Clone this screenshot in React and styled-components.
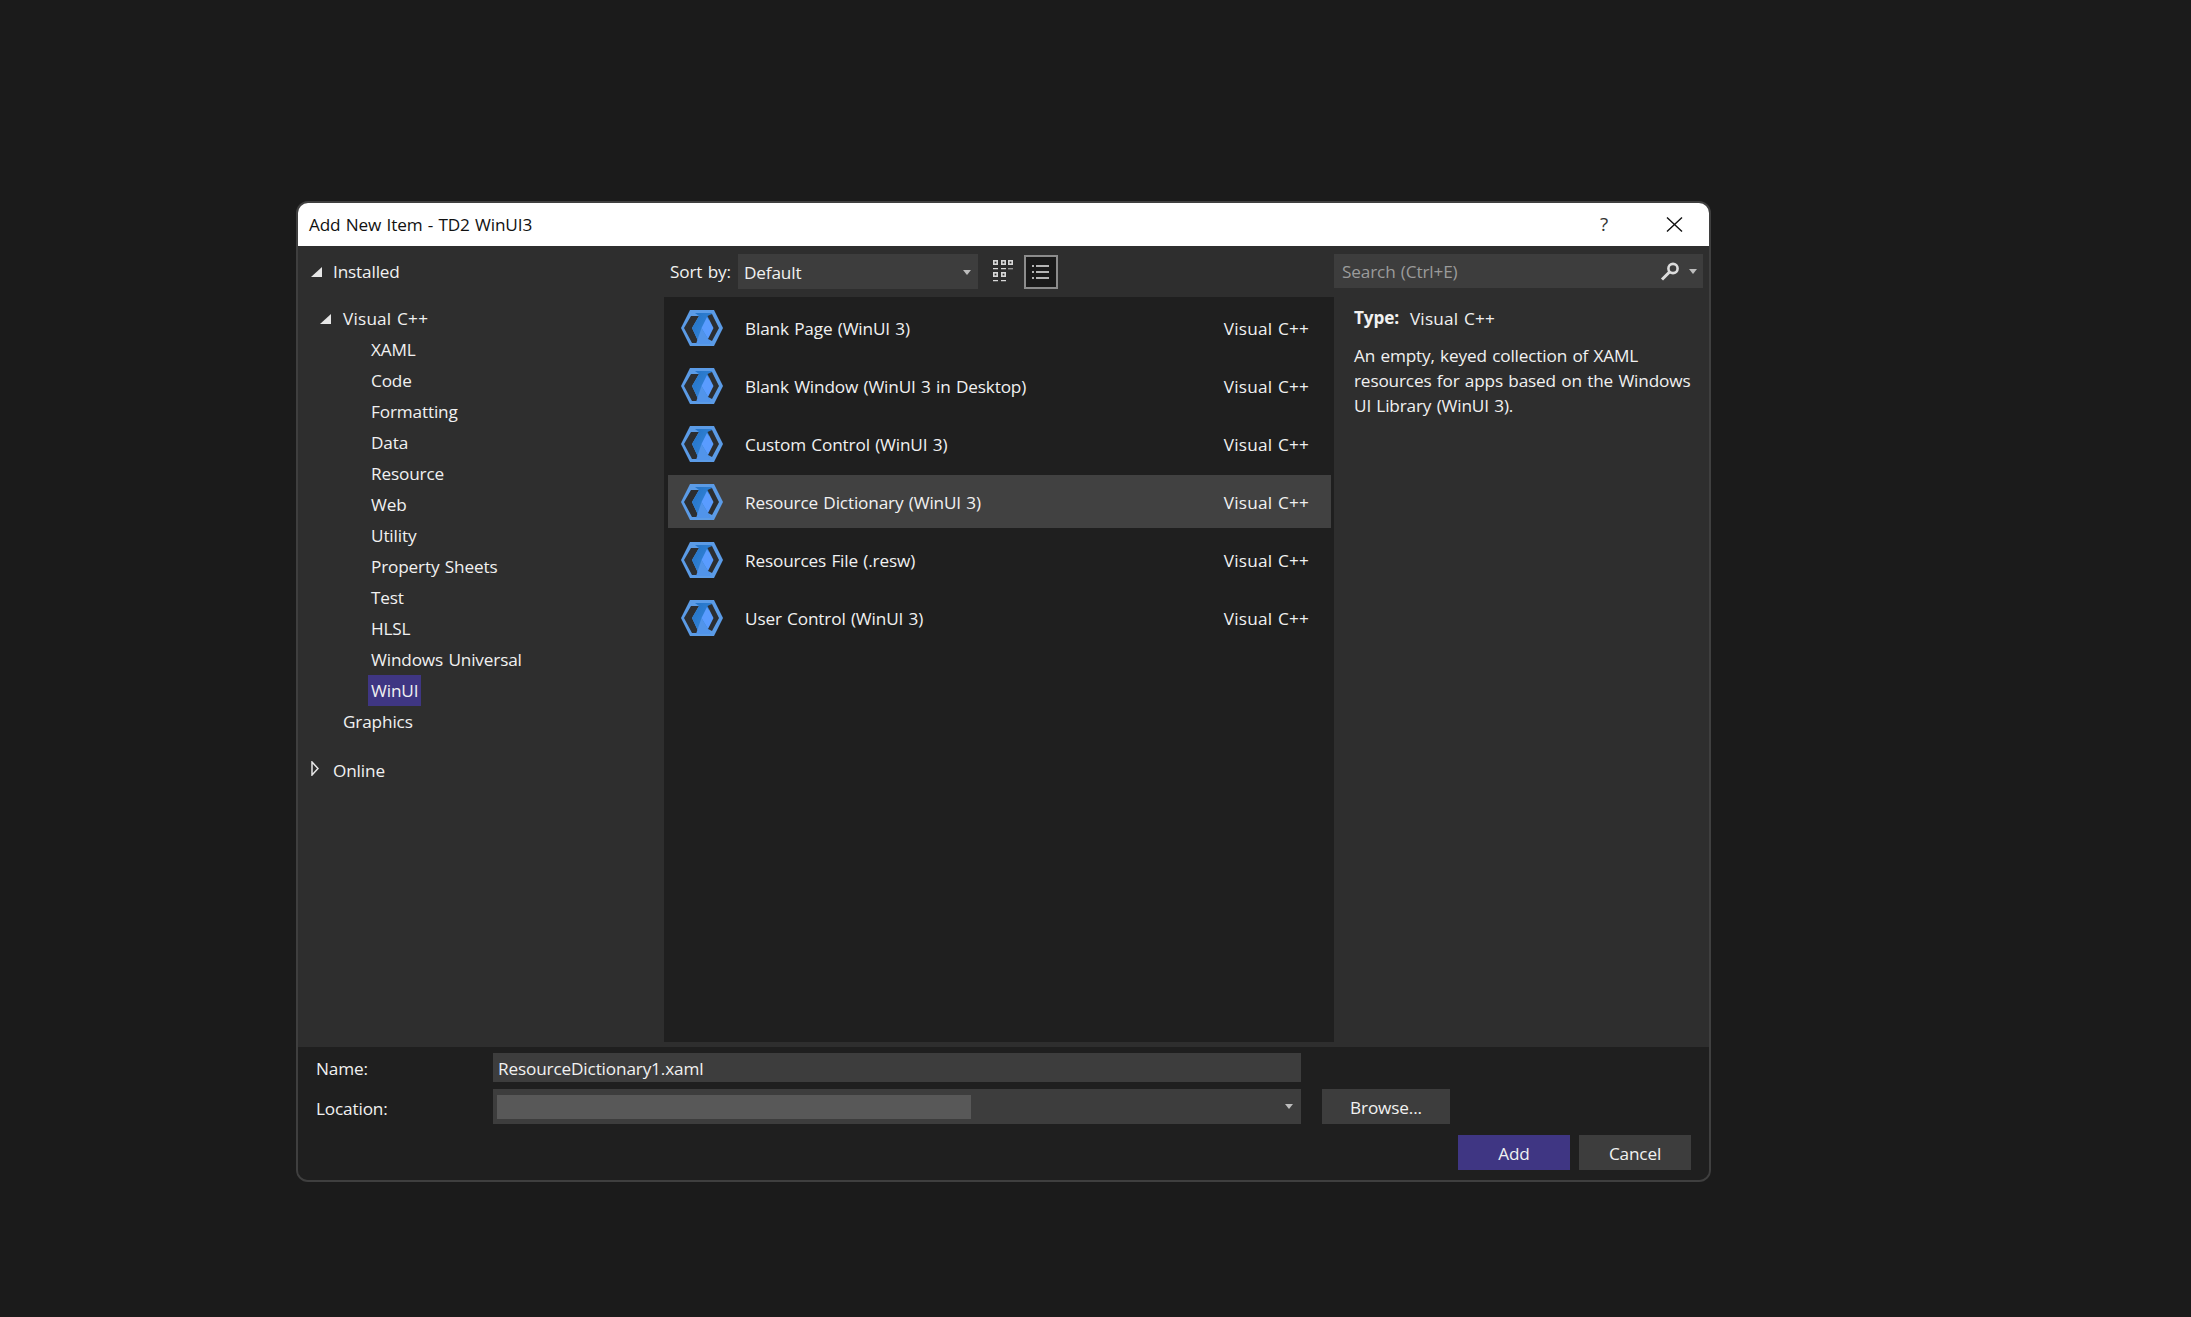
import React from 'react'
import styled, { createGlobalStyle } from 'styled-components'

const GlobalStyle = createGlobalStyle`
  html, body {
    margin: 0;
    padding: 0;
    background: #1b1b1b;
  }
  body {
    font-family: "Open Sans", "Noto Sans", sans-serif;
    font-size: 17.2px;
    letter-spacing: -0.15px;
    word-spacing: 1px;
    color: #f1f1f1;
  }
`

const Page = styled.div`
  width: 2191px;
  height: 1317px;
  padding: 201px 0 0 296px;
  box-sizing: border-box;
`

const Dialog = styled.div`
  width: 1415px;
  height: 981px;
  box-sizing: border-box;
  border: 2px solid #3f3f3f;
  border-radius: 12px;
  overflow: hidden;
  display: flex;
  flex-direction: column;
  background: #2e2e2e;
`

const TitleBar = styled.div`
  height: 43px;
  flex: none;
  background: #fff;
  color: #111;
  display: flex;
  align-items: center;
  padding: 0 26px 1px 11px;
  box-sizing: border-box;
`

const Title = styled.div`
  flex: 1;
`

const HelpMark = styled.div`
  margin-right: 58px;
  color: #333;
  font-size: 19px;
`

const Body = styled.div`
  flex: 1;
  display: grid;
  grid-template-columns: 366px 670px 375px;
  min-height: 0;
`

const Tree = styled.div`
  padding-top: 10px;
`

const TreeRow = styled.div`
  height: 31px;
  display: flex;
  align-items: center;
  padding-left: ${(p) => p.$indent}px;
  margin-top: ${(p) => p.$gap || 0}px;
`

const Expander = styled.span`
  width: 0;
  height: 0;
  margin-right: 11px;
  margin-left: ${(p) => -22 + (p.$nudge || 0)}px;
  border-style: solid;
  border-width: 0 0 10px 11px;
  border-color: transparent transparent #e6e6e6 transparent;
`

const Collapsed = styled.svg`
  width: 8px;
  height: 15px;
  margin-right: 14px;
  margin-left: -22px;
  margin-top: -5px;
`

const TreeLabel = styled.span`
  padding: 0 3px;
  margin-left: -3px;
  height: 31px;
  line-height: 32px;
  background: ${(p) => (p.$selected ? '#3f3683' : 'transparent')};
`

const PlusLabel = styled(TreeLabel)`
  letter-spacing: 0.2px;
  margin-left: -2px;
`

const Center = styled.div`
  display: flex;
  flex-direction: column;
  padding: 8px 0 5px;
  min-height: 0;
`

const Toolbar = styled.div`
  height: 35px;
  flex: none;
  display: flex;
  align-items: center;
  padding-left: 6px;
  margin-bottom: 8px;
`

const SortLabel = styled.span`
  width: 68px;
  white-space: nowrap;
`

const Dropdown = styled.div`
  width: 240px;
  height: 35px;
  background: #3d3d3d;
  display: flex;
  align-items: center;
  padding: 1px 7px 0 6px;
  box-sizing: border-box;
  justify-content: space-between;
`

const Caret = styled.span`
  width: 0;
  height: 0;
  border-style: solid;
  border-width: 5px 4.5px 0 4.5px;
  border-color: #bdbdbd transparent transparent transparent;
`

const GridToggle = styled.svg`
  width: 20px;
  height: 24px;
  margin: 0 11px 0 15px;
`

const ListToggle = styled.div`
  width: 34px;
  height: 34px;
  box-sizing: border-box;
  border: 2px solid #8c8c8c;
  background: #1a1a1a;
  display: flex;
  align-items: center;
  justify-content: center;
`

const TemplateList = styled.div`
  flex: 1;
  background: #1f1f1f;
  padding: 4px 3px 0 4px;
  display: flex;
  flex-direction: column;
  gap: 5px;
`

const TemplateRow = styled.div`
  height: 53px;
  flex: none;
  display: flex;
  align-items: center;
  padding: 0 22px 0 13px;
  background: ${(p) => (p.$selected ? '#414141' : 'transparent')};
`

const TemplateIcon = styled.svg`
  width: 42px;
  height: 36px;
  margin-right: 22px;
  flex: none;
`

const TemplateName = styled.span`
  flex: 1;
  padding-top: 1px;
`

const TemplateKind = styled.span`
  padding-top: 1px;
  letter-spacing: 0.2px;
`

const Info = styled.div`
  display: flex;
  flex-direction: column;
  padding-top: 8px;
  padding-right: 6px;
`

const SearchBox = styled.div`
  height: 34px;
  flex: none;
  background: #3d3d3d;
  display: flex;
  align-items: center;
  padding: 0 6px 0 8px;
  color: #9b9b9b;
`

const SearchText = styled.span`
  flex: 1;
`

const SearchIcon = styled.svg`
  width: 20px;
  height: 19px;
  margin-right: 9px;
`

const Details = styled.div`
  padding: 17px 0 0 20px;
  line-height: 25px;
`

const TypeLine = styled.div`
  margin-bottom: 12px;
  display: flex;
  gap: 11px;
`

const Bold = styled.span`
  font-weight: 700;
`

const Footer = styled.div`
  height: 133px;
  flex: none;
  box-sizing: border-box;
  background: #1f1f1f;
  padding: 6px 18px 0 0;
`

const FormGrid = styled.div`
  display: grid;
  grid-template-columns: 195px 808px 128px;
  row-gap: 7px;
  grid-template-rows: 29px 35px;
  align-items: center;
`

const FieldLabel = styled.div`
  padding: ${(p) => p.$drop || 1}px 0 0 18px;
`

const TextField = styled.div`
  height: 29px;
  box-sizing: border-box;
  background: #3d3d3d;
  display: flex;
  align-items: center;
  padding: 1px 0 0 5px;
`

const Combo = styled.div`
  height: 35px;
  background: #3d3d3d;
  display: flex;
  align-items: center;
  justify-content: space-between;
  padding: 0 8px 0 4px;
  box-sizing: border-box;
`

const Redacted = styled.div`
  width: 474px;
  height: 24px;
  background: #585858;
`

const Button = styled.div`
  height: 35px;
  box-sizing: border-box;
  padding-top: 1px;
  display: flex;
  align-items: center;
  justify-content: center;
  background: ${(p) => (p.$primary ? '#3f3683' : '#3d3d3d')};
  width: ${(p) => p.$width}px;
`

const BrowseButton = styled(Button)`
  margin-left: 21px;
`

const Actions = styled.div`
  display: flex;
  justify-content: flex-end;
  gap: 9px;
  margin-top: 11px;
`

const WinUiIcon = () => (
  <TemplateIcon viewBox="0 0 42 36">
    <defs>
      <linearGradient id="cubeTop" x1="0" y1="0" x2="1" y2="1">
        <stop offset="0" stopColor="#2272c4" />
        <stop offset="1" stopColor="#3a8ae0" />
      </linearGradient>
    </defs>
    <polygon points="0,18 9,0 33,0 42,18 33,36 9,36" fill="#5b9be6" />
    <polygon points="10,6 18,6 11,18 18,33 11,33 3,18" fill="#2c2e31" />
    <polygon points="14,3 31,3 24,18 29,33 16,33 18,33 11,18 18,6" fill="url(#cubeTop)" />
    <polygon points="20.5,18 26,7 32.5,18 27,29" fill="#5a9cff" />
    <polygon points="26.5,6 31,4 38,18 31,31 27,29 32.5,18" fill="#2c2e31" />
    <polygon points="20.5,18 27,29 30,34 15,34" fill="#5194ea" />
  </TemplateIcon>
)

const templates = [
  'Blank Page (WinUI 3)',
  'Blank Window (WinUI 3 in Desktop)',
  'Custom Control (WinUI 3)',
  'Resource Dictionary (WinUI 3)',
  'Resources File (.resw)',
  'User Control (WinUI 3)',
]

const categories = [
  'XAML', 'Code', 'Formatting', 'Data', 'Resource', 'Web', 'Utility',
  'Property Sheets', 'Test', 'HLSL', 'Windows Universal',
]

const App = () => {
  return (
    <Page>
      <GlobalStyle />
      <Dialog>
        <TitleBar>
          <Title>Add New Item - TD2 WinUI3</Title>
          <HelpMark>?</HelpMark>
          <svg width="17" height="15" viewBox="0 0 17 15">
            <path d="M1 0.5 L16 14.5 M16 0.5 L1 14.5" stroke="#111" strokeWidth="1.4" fill="none" />
          </svg>
        </TitleBar>

        <Body>
          <Tree>
            <TreeRow $indent={35}>
              <Expander $nudge={0} />
              <TreeLabel>Installed</TreeLabel>
            </TreeRow>
            <TreeRow $indent={45} $gap={16}>
              <Expander $nudge={-1} />
              <PlusLabel>Visual C++</PlusLabel>
            </TreeRow>
            {categories.map((name) => (
              <TreeRow key={name} $indent={73}>
                <TreeLabel>{name}</TreeLabel>
              </TreeRow>
            ))}
            <TreeRow $indent={73}>
              <TreeLabel $selected>WinUI</TreeLabel>
            </TreeRow>
            <TreeRow $indent={45}>
              <TreeLabel>Graphics</TreeLabel>
            </TreeRow>
            <TreeRow $indent={35} $gap={18}>
              <Collapsed viewBox="0 0 8 15">
                <path d="M1 1 L7 7.5 L1 14 Z" fill="none" stroke="#e6e6e6" strokeWidth="1.5" />
              </Collapsed>
              <TreeLabel>Online</TreeLabel>
            </TreeRow>
          </Tree>

          <Center>
            <Toolbar>
              <SortLabel>Sort by:</SortLabel>
              <Dropdown>
                Default
                <Caret />
              </Dropdown>
              <GridToggle viewBox="0 0 20 24">
                <g fill="none" stroke="#d8d8d8" strokeWidth="1.6">
                  <rect x="0.8" y="0.8" width="3.4" height="3.4" />
                  <rect x="8.8" y="0.8" width="3.4" height="3.4" />
                  <rect x="15.8" y="0.8" width="3.4" height="3.4" />
                  <rect x="0.8" y="12.8" width="3.4" height="3.4" />
                  <rect x="8.8" y="12.8" width="3.4" height="3.4" />
                </g>
                <g stroke="#d8d8d8" strokeWidth="1.3">
                  <path d="M0 8.7 H5 M8 8.7 H13" />
                  <path d="M15 8.7 H20" stroke="#9a9a9a" />
                  <path d="M0 20.7 H5 M8 20.7 H13" />
                </g>
              </GridToggle>
              <ListToggle>
                <svg width="18" height="16" viewBox="0 0 18 16">
                  <g stroke="#e8e8e8" strokeWidth="1.4">
                    <path d="M4 2 H17 M4 8 H17 M4 14 H17" />
                    <path d="M0 2 H2 M0 8 H2 M0 14 H2" />
                  </g>
                </svg>
              </ListToggle>
            </Toolbar>
            <TemplateList>
              {templates.map((name) => (
                <TemplateRow key={name} $selected={name.startsWith('Resource Dictionary')}>
                  <WinUiIcon />
                  <TemplateName>{name}</TemplateName>
                  <TemplateKind>Visual C++</TemplateKind>
                </TemplateRow>
              ))}
            </TemplateList>
          </Center>

          <Info>
            <SearchBox>
              <SearchText>Search (Ctrl+E)</SearchText>
              <SearchIcon viewBox="0 0 20 19">
                <circle cx="13" cy="6.5" r="4.6" fill="none" stroke="#dcdcdc" strokeWidth="2.6" />
                <path d="M9.5 10 L2 17.5" stroke="#dcdcdc" strokeWidth="3" />
              </SearchIcon>
              <Caret />
            </SearchBox>
            <Details>
              <TypeLine>
                <Bold>Type:</Bold>
                <TemplateKind>Visual C++</TemplateKind>
              </TypeLine>
              An empty, keyed collection of XAML resources for apps based on the Windows UI Library (WinUI 3).
            </Details>
          </Info>
        </Body>

        <Footer>
          <FormGrid>
            <FieldLabel>Name:</FieldLabel>
            <TextField>ResourceDictionary1.xaml</TextField>
            <div />
            <FieldLabel $drop={3}>Location:</FieldLabel>
            <Combo>
              <Redacted />
              <Caret />
            </Combo>
            <BrowseButton $width={128}>Browse...</BrowseButton>
          </FormGrid>
          <Actions>
            <Button $primary $width={112}>Add</Button>
            <Button $width={112}>Cancel</Button>
          </Actions>
        </Footer>
      </Dialog>
    </Page>
  )
}

export default App
